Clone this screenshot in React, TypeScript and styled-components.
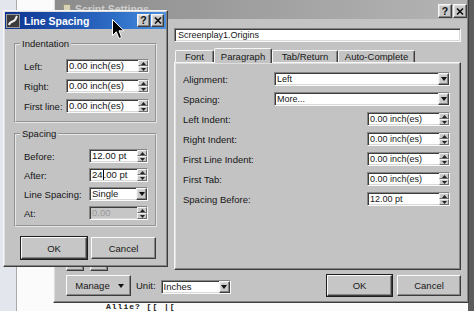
import React from "react";
import styled, { createGlobalStyle, css } from "styled-components";

const GlobalStyle = createGlobalStyle`
  html, body {
    margin: 0;
    padding: 0;
  }
  body {
    font-family: "Liberation Sans", Arial, sans-serif;
    font-size: 9px;
    color: #161616;
  }
`;

// classic 3d borders -------------------------------------------------
const raised = css`
  border: 1px solid;
  border-color: #f6f6f6 #3c3c3c #3c3c3c #f6f6f6;
  box-shadow: inset -1px -1px 0 #858585, inset 1px 1px 0 #dedede;
`;

const sunken = css`
  border: 1px solid;
  border-color: #858585 #fafafa #fafafa #858585;
  box-shadow: inset 1px 1px 0 #3c3c3c, inset -1px -1px 0 #d8d8d8;
`;

const Arrow = ({ up }: { up?: boolean }) => (
  <svg width="5" height="3" viewBox="0 0 5 3">
    <polygon points={up ? "0,3 5,3 2.5,0" : "0,0 5,0 2.5,3"} fill="#222" />
  </svg>
);

const DownTriangle = () => (
  <svg width="6" height="4" viewBox="0 0 6 4">
    <polygon points="0,0 6,0 3,4" fill="#111" />
  </svg>
);

const SpinField = ({
  value,
  disabled,
}: {
  value: React.ReactNode;
  disabled?: boolean;
}) => (
  <Field $disabled={disabled}>
    <FieldText $disabled={disabled}>{value}</FieldText>
    <SpinBox>
      <SpinHalf>
        <Arrow up />
      </SpinHalf>
      <SpinHalf>
        <Arrow />
      </SpinHalf>
    </SpinBox>
  </Field>
);

const Combo = ({ value }: { value: string }) => (
  <Field>
    <FieldText>{value}</FieldText>
    <DropButton>
      <DownTriangle />
    </DropButton>
  </Field>
);

const CloseGlyph = () => (
  <svg width="8" height="7" viewBox="0 0 8 7">
    <path d="M1 0.5 L7 6.5 M7 0.5 L1 6.5" stroke="#111" strokeWidth="1.6" />
  </svg>
);

const App = () => {
  return (
    <>
      <GlobalStyle />
      <Desktop>
        <DocText>Allie? [[ |[</DocText>

        {/* 뒤쪽 Script Settings 창 */}
        <Window $left={53} $top={-4} $width={416} $height={307}>
          <TitleBar>
            <svg width="8" height="10" viewBox="0 0 8 10">
              <rect x="0.5" y="0.5" width="7" height="9" fill="#d9d2b4" stroke="#9a9480" />
            </svg>
            <TitleText>Script Settings</TitleText>
            <TitleButtons>
              <TitleButton $size={14}>?</TitleButton>
              <TitleButton $size={14}>
                <CloseGlyph />
              </TitleButton>
            </TitleButtons>
          </TitleBar>
          <SettingsBody>
            <SideColumn>
              <SmallButtons>
                <SmallButton />
                <SmallButton />
              </SmallButtons>
            </SideColumn>
            <MainColumn>
              <NameField>Screenplay1.Origins</NameField>
              <TabStrip>
                <Tab $width={39}>Font</Tab>
                <Tab $width={58} $selected>
                  Paragraph
                </Tab>
                <Tab $width={66}>Tab/Return</Tab>
                <Tab $width={77}>Auto-Complete</Tab>
              </TabStrip>
              <TabPanel>
                <PanelLabel>Alignment:</PanelLabel>
                <WideCell>
                  <Combo value="Left" />
                </WideCell>
                <PanelLabel>Spacing:</PanelLabel>
                <WideCell>
                  <Combo value="More..." />
                </WideCell>
                <PanelLabel>Left Indent:</PanelLabel>
                <NarrowCell>
                  <SpinField value="0.00 inch(es)" />
                </NarrowCell>
                <PanelLabel>Right Indent:</PanelLabel>
                <NarrowCell>
                  <SpinField value="0.00 inch(es)" />
                </NarrowCell>
                <PanelLabel>First Line Indent:</PanelLabel>
                <NarrowCell>
                  <SpinField value="0.00 inch(es)" />
                </NarrowCell>
                <PanelLabel>First Tab:</PanelLabel>
                <NarrowCell>
                  <SpinField value="0.00 inch(es)" />
                </NarrowCell>
                <PanelLabel>Spacing Before:</PanelLabel>
                <NarrowCell>
                  <SpinField value="12.00 pt" />
                </NarrowCell>
              </TabPanel>
            </MainColumn>
            <BottomBar>
              <PushButton $width={65}>
                <ManageText>Manage</ManageText>
                <ManageArrow>
                  <DownTriangle />
                </ManageArrow>
              </PushButton>
              <UnitLabel>Unit:</UnitLabel>
              <UnitSelect>
                <Combo value="Inches" />
              </UnitSelect>
              <Spacer />
              <PushButton $width={65} $default>
                OK
              </PushButton>
              <PushButton $width={64}>Cancel</PushButton>
            </BottomBar>
          </SettingsBody>
        </Window>

        {/* 앞쪽 Line Spacing 대화상자 */}
        <Window $left={3} $top={10} $width={165} $height={257}>
          <TitleBar $active>
            <svg width="14" height="14" viewBox="0 0 14 14">
              <rect width="14" height="14" fill="#3b3b3b" />
              <rect x="0.5" y="0.5" width="13" height="13" fill="none" stroke="#9a9a9a" />
              <path d="M3 11 C4 6 9 9 10 4 L11 2" stroke="#f4f4f4" strokeWidth="2" fill="none" />
            </svg>
            <TitleText>Line Spacing</TitleText>
            <TitleButtons $active>
              <TitleButton $size={13}>?</TitleButton>
              <TitleButton $size={13}>
                <CloseGlyph />
              </TitleButton>
            </TitleButtons>
          </TitleBar>
          <DialogBody>
            <Group $gap={6} $bottom={8}>
              <Legend>Indentation</Legend>
              <FieldRow $labelWidth={42} $fieldWidth={83}>
                <span>Left:</span>
                <SpinField value="0.00 inch(es)" />
              </FieldRow>
              <FieldRow $labelWidth={42} $fieldWidth={83}>
                <span>Right:</span>
                <SpinField value="0.00 inch(es)" />
              </FieldRow>
              <FieldRow $labelWidth={42} $fieldWidth={83}>
                <span>First line:</span>
                <SpinField value="0.00 inch(es)" />
              </FieldRow>
            </Group>
            <Group $gap={5} $bottom={5}>
              <Legend>Spacing</Legend>
              <FieldRow $labelWidth={65} $fieldWidth={59}>
                <span>Before:</span>
                <SpinField value="12.00 pt" />
              </FieldRow>
              <FieldRow $labelWidth={65} $fieldWidth={59}>
                <span>After:</span>
                <SpinField
                  value={
                    <>
                      24
                      <Caret />
                      .00 pt
                    </>
                  }
                />
              </FieldRow>
              <FieldRow $labelWidth={65} $fieldWidth={59}>
                <span>Line Spacing:</span>
                <Combo value="Single" />
              </FieldRow>
              <FieldRow $labelWidth={65} $fieldWidth={59}>
                <span>At:</span>
                <SpinField value="0.00" disabled />
              </FieldRow>
            </Group>
            <DialogButtons>
              <PushButton $width={66} $default>
                OK
              </PushButton>
              <PushButton $width={65}>Cancel</PushButton>
            </DialogButtons>
          </DialogBody>
        </Window>

        <Pointer width="13" height="21" viewBox="0 0 13 21">
          <path
            d="M0.5 0.5 L0.5 16.5 L4.3 12.8 L7 19.5 L9.6 18.4 L7 11.8 L12 11.8 Z"
            fill="#000"
            stroke="#fff"
            strokeWidth="1"
          />
        </Pointer>
      </Desktop>
    </>
  );
};

const Desktop = styled.div`
  position: relative;
  width: 474px;
  height: 311px;
  overflow: hidden;
  background: linear-gradient(
    to right,
    #e3e6ec 0 16px,
    #a9a9a9 16px 17px,
    #fbfbfb 17px 468px,
    #5c5c5c 468px 100%
  );
`;

const DocText = styled.div`
  position: absolute;
  left: 106px;
  top: 302px;
  font-family: "Liberation Mono", monospace;
  font-size: 8px;
  line-height: 9px;
  font-weight: bold;
  letter-spacing: 1px;
  color: #222;
`;

const Window = styled.div<{
  $left: number;
  $top: number;
  $width: number;
  $height: number;
}>`
  position: absolute;
  left: ${(p) => p.$left}px;
  top: ${(p) => p.$top}px;
  width: ${(p) => p.$width}px;
  height: ${(p) => p.$height}px;
  box-sizing: border-box;
  padding: 1px;
  display: flex;
  flex-direction: column;
  background: #c3c3c3;
  ${raised};
`;

const TitleBar = styled.div<{ $active?: boolean }>`
  display: flex;
  align-items: center;
  gap: 4px;
  flex: none;
  height: ${(p) => (p.$active ? 17 : 21)}px;
  padding: ${(p) => (p.$active ? "0 2px 0 1px" : "0 0 0 8px")};
  background: ${(p) =>
    p.$active
      ? "linear-gradient(to right, #0c3390, #2f6fc8 70%, #4b91de)"
      : "linear-gradient(to right, #8c8c8c, #a4a4a4 60%, #b4b4b4)"};
  color: ${(p) => (p.$active ? "#fff" : "#cdcdcd")};
  font-size: 10.5px;
  font-weight: bold;
`;

const TitleText = styled.span`
  flex: 1;
  white-space: nowrap;
  line-height: 12px;
`;

const TitleButtons = styled.div<{ $active?: boolean }>`
  display: flex;
  gap: 1px;
  align-self: ${(p) => (p.$active ? "center" : "flex-end")};
  margin-bottom: ${(p) => (p.$active ? 0 : 1)}px;
`;

const TitleButton = styled.div<{ $size: number }>`
  box-sizing: border-box;
  width: ${(p) => p.$size}px;
  height: ${(p) => p.$size}px;
  display: grid;
  place-items: center;
  background: #c8c8c8;
  color: #111;
  font-size: 10.5px;
  font-weight: bold;
  line-height: 1;
  ${raised};
`;

// Script Settings 본문 ------------------------------------------------
const SettingsBody = styled.div`
  flex: 1;
  display: grid;
  grid-template-columns: 103px 1fr;
  grid-template-rows: 1fr 21px;
  column-gap: 5px;
  row-gap: 5px;
  padding: 9px 6px 5px 11px;
`;

const SideColumn = styled.div`
  display: flex;
  flex-direction: column;
  justify-content: flex-end;
`;

const SmallButtons = styled.div`
  display: flex;
  gap: 6px;
  margin-bottom: -1px;
`;

const SmallButton = styled.div`
  box-sizing: border-box;
  width: 18px;
  height: 20px;
  background: #c6c6c6;
  ${raised};
`;

const MainColumn = styled.div`
  display: flex;
  flex-direction: column;
  min-height: 0;
`;

const NameField = styled.div`
  box-sizing: border-box;
  height: 14px;
  padding-left: 3px;
  line-height: 12px;
  background: #fff;
  ${sunken};
`;

const TabStrip = styled.div`
  display: flex;
  align-items: flex-end;
  height: 14px;
  margin-top: 6px;
  padding-left: 1px;
  position: relative;
  z-index: 1;
`;

const Tab = styled.div<{ $width: number; $selected?: boolean }>`
  box-sizing: border-box;
  width: ${(p) => p.$width}px;
  height: ${(p) => (p.$selected ? 15 : 12)}px;
  margin-bottom: ${(p) => (p.$selected ? -1 : 0)}px;
  display: flex;
  align-items: center;
  justify-content: center;
  background: #c3c3c3;
  border: 1px solid;
  border-bottom: none;
  border-color: #f6f6f6 #3c3c3c #3c3c3c #f6f6f6;
  border-radius: 2px 2px 0 0;
  box-shadow: inset -1px 0 0 #858585;
  font-size: 9.5px;
`;

const TabPanel = styled.div`
  flex: 1;
  box-sizing: border-box;
  display: grid;
  grid-template-columns: 91px 93px 83px;
  grid-auto-rows: 14px;
  row-gap: 6px;
  align-content: start;
  align-items: center;
  padding: 9px 0 0 8px;
  ${raised};
`;

const PanelLabel = styled.span`
  grid-column: 1;
  font-size: 9.5px;
`;

const WideCell = styled.div`
  grid-column: 2 / span 2;
`;

const NarrowCell = styled.div`
  grid-column: 3;
`;

const BottomBar = styled.div`
  grid-column: 1 / span 2;
  display: flex;
  align-items: center;
  gap: 5px;
  height: 21px;
`;

const ManageText = styled.span`
  margin-right: 12px;
`;

const ManageArrow = styled.div`
  position: absolute;
  right: 6px;
  top: 8px;
  display: flex;
`;

const UnitLabel = styled.span`
  font-size: 9.5px;
`;

const UnitSelect = styled.div`
  width: 70px;
  margin-top: 2px;
  font-size: 9.5px;
`;

const Spacer = styled.div`
  flex: 1;
`;

// 공통 입력 요소 ------------------------------------------------------
const Field = styled.div<{ $disabled?: boolean }>`
  box-sizing: border-box;
  display: flex;
  height: 14px;
  background: ${(p) => (p.$disabled ? "#c6c6c6" : "#fff")};
  ${sunken};
`;

const FieldText = styled.span<{ $disabled?: boolean }>`
  flex: 1;
  padding-left: 2px;
  line-height: 12px;
  white-space: nowrap;
  overflow: hidden;
  color: ${(p) => (p.$disabled ? "#9a9a9a" : "#161616")};
`;

const SpinBox = styled.div`
  flex: none;
  width: 10px;
  display: flex;
  flex-direction: column;
`;

const SpinHalf = styled.div`
  flex: 1;
  box-sizing: border-box;
  display: grid;
  place-items: center;
  background: #cacaca;
  border: 1px solid;
  border-color: #f2f2f2 #6e6e6e #6e6e6e #f2f2f2;
`;

const DropButton = styled.div`
  flex: none;
  box-sizing: border-box;
  width: 11px;
  display: grid;
  place-items: center;
  background: #cacaca;
  ${raised};
`;

const Caret = styled.span`
  display: inline-block;
  width: 1px;
  height: 10px;
  margin: 0 0 -2px;
  background: #000;
`;

const PushButton = styled.div<{ $width: number; $default?: boolean }>`
  position: relative;
  box-sizing: border-box;
  width: ${(p) => p.$width}px;
  height: 100%;
  display: flex;
  align-items: center;
  justify-content: center;
  background: #c6c6c6;
  border: 1px solid;
  border-color: #fafafa #3c3c3c #3c3c3c #fafafa;
  box-shadow: inset -1px -1px 0 #858585
    ${(p) => (p.$default ? ", 0 0 0 1px #1e1e1e" : "")};
  font-size: 9.5px;
`;

// Line Spacing 본문 ---------------------------------------------------
const DialogBody = styled.div`
  flex: 1;
  display: flex;
  flex-direction: column;
  padding: 9px 9px 7px 9px;
`;

const Group = styled.fieldset<{ $gap: number; $bottom: number }>`
  margin: 0 0 5px;
  padding: 10px 8px ${(p) => p.$bottom}px 8px;
  display: flex;
  flex-direction: column;
  gap: ${(p) => p.$gap}px;
  border: 2px groove #e6e6e6;
  min-inline-size: 0;
`;

const Legend = styled.legend`
  margin-left: -4px;
  padding: 0 2px;
  line-height: 11px;
  font-size: 9.5px;
`;

const FieldRow = styled.div<{ $labelWidth: number; $fieldWidth: number }>`
  display: grid;
  grid-template-columns: ${(p) => p.$labelWidth}px ${(p) => p.$fieldWidth}px;
  align-items: center;
  height: 14px;
  font-size: 9.5px;
`;

const DialogButtons = styled.div`
  display: flex;
  justify-content: flex-end;
  gap: 4px;
  height: 22px;
  margin-top: 5px;
  padding-right: 1px;
`;

const Pointer = styled.svg`
  position: absolute;
  left: 112px;
  top: 19px;
`;

export default App;
